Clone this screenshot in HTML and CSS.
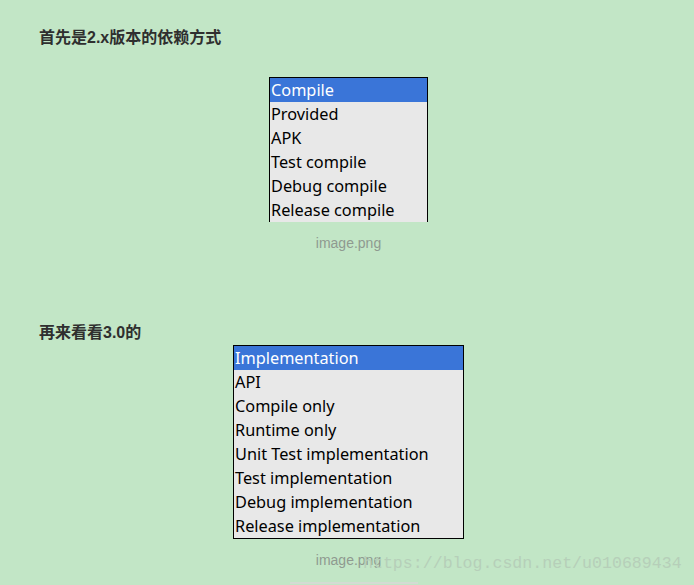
FILE: index.html
```html
<!DOCTYPE html>
<html lang="zh-CN">
<head>
    <meta charset="UTF-8">
    <meta name="viewport" content="width=device-width, initial-scale=1.0">
    <title>依赖方式</title>
    <link rel="stylesheet" href="styles.css">
</head>
<body>
    <div class="article">
        <h3 class="section-title">首先是2.x版本的依赖方式</h3>

        <div class="figure">
            <div class="listbox listbox-open">
                <div class="option selected">Compile</div>
                <div class="option">Provided</div>
                <div class="option">APK</div>
                <div class="option">Test compile</div>
                <div class="option">Debug compile</div>
                <div class="option">Release compile</div>
            </div>
            <div class="caption">image.png</div>
        </div>

        <h3 class="section-title second">再来看看3.0的</h3>

        <div class="figure figure-tight">
            <div class="listbox listbox-wide">
                <div class="option selected">Implementation</div>
                <div class="option">API</div>
                <div class="option">Compile only</div>
                <div class="option">Runtime only</div>
                <div class="option">Unit Test implementation</div>
                <div class="option">Test implementation</div>
                <div class="option">Debug implementation</div>
                <div class="option">Release implementation</div>
            </div>
            <div class="caption">image.png</div>
            <span class="watermark">https://blog.csdn.net/u010689434</span>
        </div>

        <div class="next-rule"></div>
    </div>
</body>
</html>
```

FILE: styles.css
```css
body {
    margin: 0;
    background-color: #c2e6c6;
    font-family: "Liberation Sans", Arial, sans-serif;
}
.article {
    padding: 26px 36px 0 39px;
}
.section-title {
    margin: 0;
    font-family: "Liberation Sans", "Noto Sans CJK SC", sans-serif;
    font-size: 16px;
    line-height: 24px;
    font-weight: bold;
    color: #2f2f2f;
}
.section-title.second {
    margin-top: 68px;
}
.figure {
    position: relative;
    display: flex;
    flex-direction: column;
    align-items: center;
    margin-top: 27px;
}
.figure-tight {
    margin-top: 0;
}
.listbox {
    border: 1px solid #000;
    background-color: #e8e8e8;
    font-family: "Noto Sans", sans-serif;
    font-size: 16.3px;
    color: #000;
}
.listbox-open {
    width: 157px;
    border-bottom: none;
}
.listbox-wide {
    width: 229px;
}
.option {
    height: 24px;
    line-height: 24px;
    padding-left: 1px;
    white-space: nowrap;
}
.option.selected {
    background-color: #3a75d8;
    color: #fff;
}
.caption {
    margin-top: 11px;
    font-size: 14px;
    line-height: 20px;
    color: #8f9a90;
}
.watermark {
    position: absolute;
    left: 324px;
    bottom: -3px;
    font-family: "Liberation Mono", monospace;
    font-size: 16.6px;
    color: #b6cfb9;
    white-space: nowrap;
}
.next-rule {
    width: 128px;
    height: 2px;
    margin: 12px 0 0 251px;
    background-color: #d3dcd3;
}
```
